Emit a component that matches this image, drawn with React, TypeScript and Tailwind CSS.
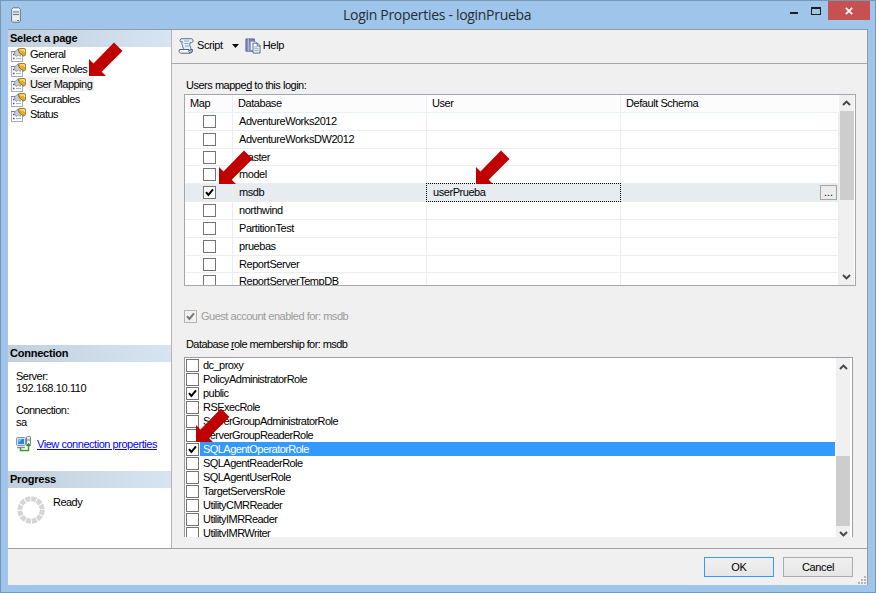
import React, { useState } from 'react';

const PAGES = ['General', 'Server Roles', 'User Mapping', 'Securables', 'Status'];

const DATABASES = [
  { name: 'AdventureWorks2012' },
  { name: 'AdventureWorksDW2012' },
  { name: 'master' },
  { name: 'model' },
  { name: 'msdb', user: 'userPrueba', mapped: true },
  { name: 'northwind' },
  { name: 'PartitionTest' },
  { name: 'pruebas' },
  { name: 'ReportServer' },
  { name: 'ReportServerTempDB' },
];

const ROLES = [
  'dc_proxy',
  'PolicyAdministratorRole',
  'public',
  'RSExecRole',
  'ServerGroupAdministratorRole',
  'ServerGroupReaderRole',
  'SQLAgentOperatorRole',
  'SQLAgentReaderRole',
  'SQLAgentUserRole',
  'TargetServersRole',
  'UtilityCMRReader',
  'UtilityIMRReader',
  'UtilityIMRWriter',
];

const CheckBox: React.FC<{ checked?: boolean; disabled?: boolean }> = ({ checked, disabled }) => (
  <span
    className={`flex size-[13px] shrink-0 items-center justify-center border ${
      disabled ? 'border-[#b4b4b4] bg-[#f0f0f0]' : 'border-[#747474] bg-white'
    }`}
  >
    {checked && (
      <svg width="11" height="11" viewBox="0 0 11 11" fill="none">
        <path d="M2 5.2 4.4 7.9 9 2.4" stroke={disabled ? '#777' : '#000'} strokeWidth="2" />
      </svg>
    )}
  </span>
);

const Chevron: React.FC<{ down?: boolean }> = ({ down }) => (
  <svg width="9" height="6" viewBox="0 0 9 6" fill="none" className={down ? 'rotate-180' : ''}>
    <path d="M1 5 4.5 1.5 8 5" stroke="#444" strokeWidth="1.9" />
  </svg>
);

const PageIcon = () => (
  <svg width="15" height="14" viewBox="0 0 15 14">
    <rect x=".5" y="3.5" width="11" height="10" fill="#fff" stroke="#a3adba" />
    <path d="M0 3.5h5" stroke="#6e87a8" />
    <path d="M2 6.500h1.500M2 10.500h1.500" stroke="#3c4f9c" strokeWidth="1.4" />
    <path d="M5 10.500h5" stroke="#a9b4c6" strokeWidth="1.2" />
    <path d="M3.500 4 7 1l3 .5.5 5L9 8.500 7.500 7 5 8.500 4 7Z" fill="#c9cdd2" stroke="#7c828b" strokeWidth=".7" />
    <path d="M7 1.500 8.500.4h5l1.200 1v5.200L13 8.300 10.500 6.500 8.500 5Z" fill="#dfae2b" stroke="#7b5b18" strokeWidth=".8" />
    <path d="m9 2 3.500-.4 1 1v1.500" stroke="#ffe88a" fill="none" strokeWidth="1.2" />
  </svg>
);

const ServerIcon = () => (
  <svg width="10" height="16" viewBox="0 0 10 16">
    <path d="M.5 2.500 2 .7h6l1.500 1.800V14l-1.200 1.300H1.700L.5 14Z" fill="#dbe3eb" stroke="#718191" />
    <path d="M1.500 2.500h7" stroke="#fff" />
    <path d="M2 5h6M2 7.500h6" stroke="#6d7e90" />
    <path d="M2 10h6M2 12h6" stroke="#f7fafc" />
    <path d="M6 13.500h2" stroke="#4b8b4b" />
  </svg>
);

const ScriptIcon = () => (
  <svg width="16" height="16" viewBox="0 0 16 16">
    <path d="M3 .7h10.500q1.500.2 1.500 2t-1.500 2H12q-.8 2 .5 4.500.8 1.600.2 3.300H5q1-2-.4-4.300Q3 5.500 4.400 3.800H2.500Q1 2.300 3 .7Z" fill="#e4ecf8" stroke="#5b7293" />
    <path d="M1.500 11.500h9.500q-1 2 1 3.700H2.500q-2.400-1.500-1-3.700Z" fill="#fff" stroke="#4c6385" />
    <path d="M12 15.200q3-.4 2.500-3.700h-2" fill="#9db4d6" stroke="#4c6385" />
    <path d="M6 3h5M6.500 5.500h4M7 8h4" stroke="#8fa6ca" />
  </svg>
);

const HelpIcon = () => (
  <svg width="16" height="16" viewBox="0 0 17 17">
    <path d="M1 1h9v13H1Z" fill="#7f86ba" stroke="#575e91" />
    <path d="M3.500 1v13" stroke="#c4c9e6" />
    <path d="M5.500 3.500h5l2 2v8h-7Z" fill="#eef2fa" stroke="#7b8baa" />
    <path d="M8.500 5.500h5l2.500 2.500v8H8.500Z" fill="#f8fbff" stroke="#4d6485" />
    <path d="M13 5.500V8.500h3" fill="none" stroke="#4d6485" />
    <path d="M10 9.500h3M10 11.500h4.500M10 13.500h4.500" stroke="#8297b8" />
  </svg>
);

const ConnectionIcon = () => (
  <svg width="16" height="16" viewBox="0 0 16 16">
    <rect x=".5" y="1.500" width="9" height="8" rx="1" fill="#d5dde7" stroke="#8696a9" />
    <rect x="2" y="3" width="6" height="5" fill="#2885e8" />
    <path d="M2 3h4L2.500 7Z" fill="#80bcff" />
    <path d="M1 11.500h8" stroke="#8290a1" strokeWidth="1.500" />
    <rect x="10.500" y=".5" width="4" height="9" rx="1" fill="#e7ebf0" stroke="#7b8796" />
    <path d="M11 4h3" stroke="#7b8796" />
    <path d="M4.500 11.500v3h8V8" fill="none" stroke="#35a027" strokeWidth="1.500" />
    <path d="m10 10 2.500-3L15 10Z" fill="#24861c" />
  </svg>
);

const Spinner = () => (
  <svg width="28" height="28" viewBox="0 0 28 28">
    <circle cx="14" cy="14" r="11.200" fill="none" stroke="#d5d5d5" strokeWidth="5" strokeDasharray="4.860 1" />
  </svg>
);

const SectionTitle: React.FC<{ children: React.ReactNode }> = ({ children }) => (
  <div className="flex h-[17px] shrink-0 items-center bg-linear-to-r from-[#c2cfdd] to-[#d7e4f2] pl-[2px] font-bold tracking-[-0.22px]">
    {children}
  </div>
);

// Red block arrow, pointing down and left
const Arrow: React.FC<{ className: string }> = ({ className }) => (
  <svg width="34" height="34" viewBox="0 0 34 34" className={`absolute ${className}`}>
    <path d="M0 17 4.500 21.500 25 .6 33.500 9 12.700 29.700 17 34H0Z" fill="#c00000" />
  </svg>
);

const Sidebar = () => (
  <aside className="flex w-[163px] shrink-0 flex-col bg-white">
    <SectionTitle>Select a page</SectionTitle>
    <div className="flex h-[298px] flex-col">
      {PAGES.map(page => (
        <div key={page} className="flex h-[15px] items-center pl-[3px]">
          <PageIcon />
          <span className={`-mt-px ml-[2px] px-[2px] leading-[14px] ${page === 'User Mapping' ? 'bg-[#f0f0f0]' : ''}`}>{page}</span>
        </div>
      ))}
    </div>
    <SectionTitle>Connection</SectionTitle>
    <div className="flex h-[109px] flex-col pt-[8px] pl-2 leading-[12px]">
      <span>Server:</span>
      <span className="tracking-[-0.38px]">192.168.10.110</span>
      <span className="mt-[10px]">Connection:</span>
      <span>sa</span>
      <div className="mt-[8px] flex items-center gap-[5px]">
        <ConnectionIcon />
        <a className="tracking-[-0.46px] text-[#0000ff] underline">View connection properties</a>
      </div>
    </div>
    <SectionTitle>Progress</SectionTitle>
    <div className="flex gap-[8px] pt-[8px] pl-[9px]">
      <Spinner />
      <span className="leading-[13px]">Ready</span>
    </div>
  </aside>
);

const MappingGrid = () => (
  <div className="flex h-[192px] w-[672px] overflow-hidden border border-[#a3a7ad] bg-white tracking-[-0.44px]">
    <div className="w-[654px] shrink-0">
      <div className="flex h-[18px] items-center border-b border-[#e9f0f7] bg-[#fcfcfd]">
        <span className="w-[48px] border-r border-[#e5eff9] pl-[5px] leading-[17px]">Map</span>
        <span className="w-[194px] border-r border-[#e5eff9] pl-[5px] leading-[17px]">Database</span>
        <span className="w-[194px] border-r border-[#e5eff9] pl-[5px] leading-[17px]">User</span>
        <span className="pl-[5px]">Default Schema</span>
      </div>
      {DATABASES.map(db => (
        <div key={db.name} className={`flex h-[17.84px] border-b border-[#ededed] ${db.mapped ? 'bg-[#e7ecf1]' : ''}`}>
          <div className="flex w-[48px] shrink-0 items-center border-r border-[#ededed] pl-[18px]">
            <CheckBox checked={db.mapped} />
          </div>
          <div className="w-[194px] shrink-0 border-r border-[#ededed] pl-[6px] leading-[17px]">{db.name}</div>
          <div
            className={
              db.user
                ? '-mt-px -ml-px h-[19px] w-[195px] shrink-0 border border-dotted border-black pl-[6px] leading-[17px]'
                : 'w-[194px] shrink-0 border-r border-[#ededed]'
            }
          >
            {db.user}
          </div>
          <div className="flex flex-1 items-center justify-end border-r border-[#ededed] pr-px">
            {db.mapped && (
              <button className="h-[15px] w-[17px] border border-[#a5a5a5] bg-[#ececec] leading-[9px] tracking-normal">...</button>
            )}
          </div>
        </div>
      ))}
    </div>
    <div className="mr-px flex flex-1 flex-col items-center bg-[#f0f0f0]">
      <div className="flex h-[16px] items-center"><Chevron /></div>
      <div className="h-[89px] w-[14px] bg-[#cdcdcd]" />
      <div className="mt-auto flex h-[16px] items-center"><Chevron down /></div>
    </div>
  </div>
);

const RoleList = () => {
  const [checked, setChecked] = useState(['public', 'SQLAgentOperatorRole']);

  const toggle = (role: string) =>
    setChecked(prev => (prev.includes(role) ? prev.filter(r => r !== role) : [...prev, role]));

  return (
    <div className="flex h-[180px] w-[669px] overflow-hidden border border-b-0 border-[#9a9ea5] bg-white tracking-[-0.55px]">
      <div className="w-[650px] shrink-0 pl-px">
        {ROLES.map(role => (
          <div key={role} className="flex h-[14.04px] items-center" onClick={() => toggle(role)}>
            <CheckBox checked={checked.includes(role)} />
            <span
              className={`ml-px h-[14px] flex-1 pl-[3px] leading-[14px] ${
                role === 'SQLAgentOperatorRole' ? 'bg-[#3399ff] text-white' : ''
              }`}
            >
              {role}
            </span>
          </div>
        ))}
      </div>
      <div className="mr-[2px] ml-px flex flex-1 flex-col items-center bg-[#f0f0f0]">
        <div className="flex h-[18px] items-center"><Chevron /></div>
        <div className="mt-[80px] h-[70px] w-[14px] bg-[#cdcdcd]" />
        <div className="mt-[5px]"><Chevron down /></div>
      </div>
    </div>
  );
};

export default function App() {
  return (
    <div className="relative flex h-[593px] w-[876px] cursor-default flex-col overflow-hidden border border-[#7896b5] bg-[#9fc6ea] px-[7px] pb-[7px] font-['Liberation_Sans',sans-serif] text-[11px] tracking-[-0.52px] text-black select-none">
      <header className="flex h-[28px] shrink-0 items-start">
        <div className="w-[335px] pt-[6px] pl-[3px]"><ServerIcon /></div>
        <h1 className="font-['Open_Sans',sans-serif] text-[14px] leading-[28px] tracking-[-0.3px] text-[#252d35]">
          Login Properties - loginPrueba
        </h1>
        <div className="ml-auto flex">
          <div className="flex h-[18px] w-[26px] items-center pt-[6px] pl-[5px]"><div className="h-[2px] w-[8px] bg-[#1e1e1e]" /></div>
          <div className="mt-[6px] mr-[7px] h-[8px] w-[10px] border border-t-2 border-[#1e1e1e]" />
          <div className="mr-[-2px] flex h-[19px] w-[42px] items-center justify-center bg-[#c75050]">
            <svg width="8" height="8" viewBox="0 0 8 8"><path d="m.8.8 6.400 6.400M7.200.8.8 7.200" stroke="#fff" strokeWidth="1.700" /></svg>
          </div>
        </div>
      </header>

      <div className="flex min-h-0 flex-1 flex-col border-t border-r border-[#929ca7] bg-[#f0f0f0]">
        <div className="flex h-[519px] shrink-0 border-b border-[#a0a0a0]">
          <Sidebar />
          <main className="flex min-w-0 flex-1 flex-col border-l border-[#b5b5b5]">
            <div className="flex h-[34px] shrink-0 items-center border-b border-[#a8a8a8] pb-[2px] pl-[6px]">
              <ScriptIcon />
              <span className="ml-[3px] tracking-[-0.4px]">Script</span>
              <svg width="7" height="4" viewBox="0 0 7 4" className="mr-[6px] ml-[9px]"><path d="M0 0h7L3.500 4Z" /></svg>
              <HelpIcon />
              <span className="ml-[2px] tracking-[-0.3px]">Help</span>
            </div>
            <div className="flex flex-col pl-[12px]">
              <span className="mt-[14px] mb-px ml-[2px] h-[15px] leading-[15px] tracking-[-0.48px]">Users mappe<u>d</u> to this login:</span>
              <MappingGrid />
              <div className="mt-[24px] flex h-[13px] items-center gap-[4px] tracking-[-0.48px] text-[#9b9b9b]">
                <CheckBox checked disabled />
                Guest account enabled for: msdb
              </div>
              <span className="mt-[14px] mb-[5px] ml-[2px] h-[15px] leading-[15px] tracking-[-0.58px]">Database <u>r</u>ole membership for: msdb</span>
              <RoleList />
            </div>
          </main>
        </div>
        <footer className="relative flex flex-1 items-start justify-end gap-[9px] pt-[8px] pr-[14px]">
          <button className="h-[20px] w-[70px] border border-[#3399ff] bg-linear-to-b from-[#f0f0f0] to-[#e6e6e6] tracking-[-0.1px]">OK</button>
          <button className="h-[20px] w-[70px] border border-[#acacac] bg-linear-to-b from-[#f0f0f0] to-[#e6e6e6] tracking-[-0.4px]">Cancel</button>
          <svg width="8" height="8" viewBox="0 0 8 8" className="absolute right-px bottom-px" fill="#b5b5b5">
            <path d="M6 0h2v2H6ZM3 3h2v2H3ZM6 3h2v2H6ZM0 6h2v2H0ZM3 6h2v2H3ZM6 6h2v2H6Z" />
          </svg>
        </footer>
      </div>

      <Arrow className="top-[41px] left-[88px]" />
      <Arrow className="top-[149px] left-[218px]" />
      <Arrow className="top-[149px] left-[475px]" />
      <Arrow className="top-[407px] left-[195px]" />
    </div>
  );
}
